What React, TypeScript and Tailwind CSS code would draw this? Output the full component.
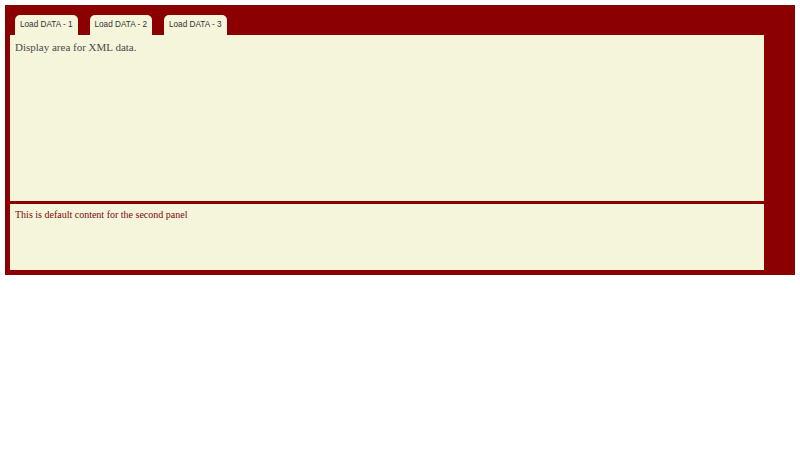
import React from "react";

export default function App() {
  const tabs = ["Load DATA - 1", "Load DATA - 2", "Load DATA - 3"];
  return (
    <div className="w-[800px] h-[450px] bg-white pt-[5px] pl-[5px]">
      <div className="w-[790px] h-[270px] bg-[#8b0000] pt-[10px] pl-[5px] flex flex-col">
        <div className="flex gap-[12px] pl-[5px] h-[20px]">
          {tabs.map((t) => (
            <div
              key={t}
              className="h-[20px] px-[5px] flex items-center bg-[#f5f5dc] rounded-t-[5px] text-[8.2px] text-[#333] whitespace-nowrap"
              style={{ fontFamily: '"Liberation Sans", Arial, sans-serif' }}
            >
              {t}
            </div>
          ))}
        </div>
        <div
          className="w-[754px] h-[166px] bg-[#f5f5dc] px-[5px] pt-[4px] text-[11px] text-[#4a4a4a]"
          style={{ fontFamily: '"Liberation Serif", "Times New Roman", serif' }}
        >
          Display area for XML data.
        </div>
        <div
          className="mt-[3px] w-[754px] h-[66px] bg-[#f5f5dc] px-[5px] pt-[3px] text-[10px] text-[#7a0a0a]"
          style={{ fontFamily: '"Liberation Serif", "Times New Roman", serif' }}
        >
          This is default content for the second panel
        </div>
      </div>
    </div>
  );
}
